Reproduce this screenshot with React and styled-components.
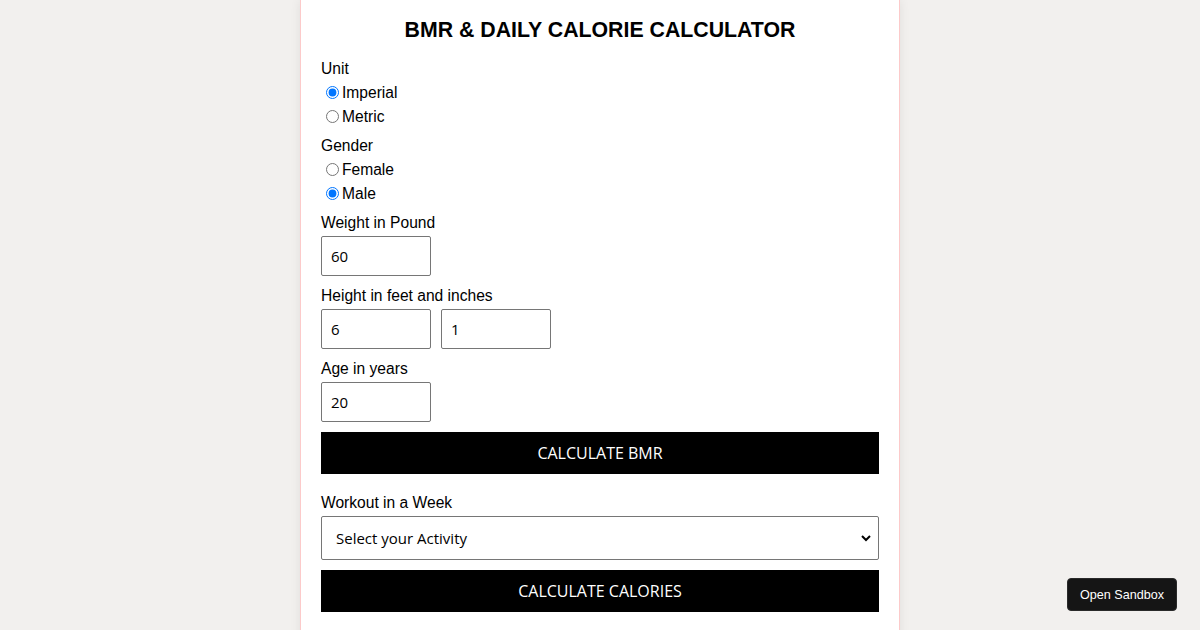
import React, { useState } from "react";
import styled, { createGlobalStyle } from "styled-components";

const Global = createGlobalStyle`
  html, body { margin: 0; padding: 0; background: #f2f0ee; }
  body { font-family: "Liberation Sans", Arial, sans-serif; color: #000; }
  * { box-sizing: border-box; }
`;

const Page = styled.div`
  height: 630px;
  overflow: hidden;
  display: flex;
  justify-content: center;
`;

const Card = styled.div`
  width: 600px;
  height: 660px;
  background: #fff;
  border-left: 1px solid #fccaca;
  border-right: 1px solid #fccaca;
  box-shadow: 0 0 10px rgba(0, 0, 0, 0.08);
  padding: 19px 20px;
  display: flex;
  flex-direction: column;
`;

const Title = styled.h1`
  margin: 0 0 18px;
  font-size: 21.3px;
  line-height: 23px;
  font-weight: 700;
  text-align: center;
  font-family: "Liberation Sans", Arial, sans-serif;
`;

const Group = styled.div`
  display: flex;
  flex-direction: column;
  align-items: flex-start;
  margin-bottom: ${(p) => p.$mb ?? 10}px;
`;

const Label = styled.div`
  font-size: 15.6px;
  line-height: 18px;
  margin-bottom: ${(p) => p.$mb ?? 4}px;
`;

const RadioRow = styled.label`
  display: flex;
  align-items: center;
  height: 24px;
  font-size: 15.6px;
  line-height: 18px;

  input {
    width: 13px;
    height: 13px;
    margin: 0 3px 2px 5px;
  }
`;

const InputRow = styled.div`
  display: flex;
  gap: 10px;
`;

const TextInput = styled.input`
  width: 110px;
  height: 40px;
  border: 1px solid #767676;
  border-radius: 2px;
  padding: 0 9px;
  font-family: "Open Sans", sans-serif;
  font-size: 15px;
  color: #000;
  background: #fff;
  outline: none;
`;

const Button = styled.button`
  width: 100%;
  height: 42px;
  flex-shrink: 0;
  background: #000;
  color: #fff;
  border: none;
  font-family: "Open Sans", sans-serif;
  font-size: 16px;
  text-transform: uppercase;
  margin-bottom: ${(p) => p.$mb ?? 0}px;
  cursor: pointer;
`;

const SelectWrap = styled.div`
  position: relative;
  width: 100%;
`;

const Select = styled.select`
  width: 100%;
  height: 44px;
  border: 1px solid #767676;
  border-radius: 2px;
  padding: 0 14px;
  font-family: "Open Sans", sans-serif;
  font-size: 15px;
  color: #000;
  background: #fff;
  appearance: none;
  outline: none;
`;

const Chevron = styled.svg`
  position: absolute;
  right: 7px;
  top: 17px;
  pointer-events: none;
`;

const Sandbox = styled.a`
  position: fixed;
  right: 23px;
  bottom: 19px;
  height: 33px;
  padding: 0 12px 0 12px;
  display: flex;
  align-items: center;
  background: #151515;
  color: #fff;
  border-radius: 4px;
  border: 1px solid #2a2a2a;
  font-family: "Liberation Sans", Arial, sans-serif;
  font-size: 12.6px;
  text-decoration: none;
`;

export default function App() {
  const [unit, setUnit] = useState("imperial");
  const [gender, setGender] = useState("male");
  return (
    <>
      <Global />
      <Page>
        <Card>
          <Title>BMR &amp; DAILY CALORIE CALCULATOR</Title>
          <Group $mb={8}>
            <Label $mb={3}>Unit</Label>
            <RadioRow>
              <input type="radio" name="unit" checked={unit === "imperial"} onChange={() => setUnit("imperial")} />
              Imperial
            </RadioRow>
            <RadioRow>
              <input type="radio" name="unit" checked={unit === "metric"} onChange={() => setUnit("metric")} />
              Metric
            </RadioRow>
          </Group>
          <Group $mb={8}>
            <Label $mb={3}>Gender</Label>
            <RadioRow>
              <input type="radio" name="gender" checked={gender === "female"} onChange={() => setGender("female")} />
              Female
            </RadioRow>
            <RadioRow>
              <input type="radio" name="gender" checked={gender === "male"} onChange={() => setGender("male")} />
              Male
            </RadioRow>
          </Group>
          <Group $mb={11}>
            <Label>Weight in Pound</Label>
            <TextInput defaultValue="60" />
          </Group>
          <Group $mb={11}>
            <Label>Height in feet and inches</Label>
            <InputRow>
              <TextInput defaultValue="6" />
              <TextInput defaultValue="1" />
            </InputRow>
          </Group>
          <Group $mb={10}>
            <Label>Age in years</Label>
            <TextInput defaultValue="20" />
          </Group>
          <Button $mb={20}>Calculate BMR</Button>
          <Group $mb={10}>
            <Label>Workout in a Week</Label>
            <SelectWrap>
              <Select defaultValue="">
                <option value="">Select your Activity</option>
                <option value="1.2">Sedentary</option>
                <option value="1.375">Light</option>
              </Select>
              <Chevron width="12" height="10" viewBox="0 0 12 10">
                <path d="M2 3 L6 7 L10 3" fill="none" stroke="#000" strokeWidth="2" />
              </Chevron>
            </SelectWrap>
          </Group>
          <Button>Calculate Calories</Button>
        </Card>
      </Page>
      <Sandbox href="#">Open Sandbox</Sandbox>
    </>
  );
}
